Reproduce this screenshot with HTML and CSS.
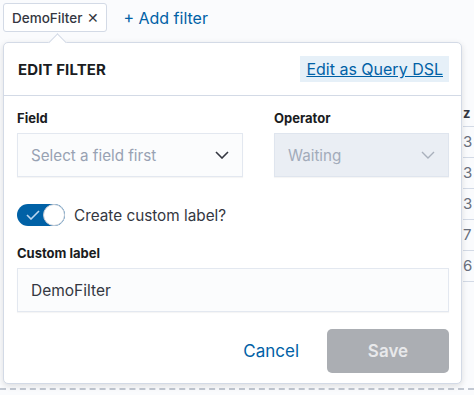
FILE: index.html
```html
<!DOCTYPE html>
<html lang="en">
<head>
  <meta charset="UTF-8" />
  <meta name="viewport" content="width=device-width, initial-scale=1.0"/>
  <title>Edit filter</title>
  <link rel="stylesheet" href="styles.css">
</head>
<body>
  <div class="filter-bar">
    <span class="pill">DemoFilter <span class="pill-x">&#x2715;</span></span>
    <a class="add-filter">+ Add filter</a>
  </div>

  <div class="content">
    <div class="table-col">
      <div class="cell head">z</div>
      <div class="cell">3</div>
      <div class="cell">3</div>
      <div class="cell">3</div>
      <div class="cell">7</div>
      <div class="cell">6</div>
    </div>
    <div class="dash-line"></div>

    <div class="popover">
      <div class="arrow"></div>
      <div class="pop-head">
        <span class="pop-title">EDIT FILTER</span>
        <a class="dsl-link">Edit as Query DSL</a>
      </div>
      <div class="pop-body">
        <div class="row">
          <div class="field grow">
            <label>Field</label>
            <div class="select">
              <span class="placeholder">Select a field first</span>
              <svg width="14" height="8" viewBox="0 0 14 8"><path d="M1 1l6 6 6-6" fill="none" stroke="#343741" stroke-width="1.6"/></svg>
            </div>
          </div>
          <div class="field op">
            <label>Operator</label>
            <div class="select disabled">
              <span class="placeholder">Waiting</span>
              <svg width="14" height="8" viewBox="0 0 14 8"><path d="M1 1l6 6 6-6" fill="none" stroke="#a9b0bc" stroke-width="1.4"/></svg>
            </div>
          </div>
        </div>

        <div class="switch-row">
          <span class="switch">
            <svg class="check" width="14" height="10" viewBox="0 0 14 10"><path d="M1 5l4 4 8-8" fill="none" stroke="#bcd7f0" stroke-width="1.6"/></svg>
            <span class="knob"></span>
          </span>
          <span class="switch-label">Create custom label?</span>
        </div>

        <div class="field">
          <label>Custom label</label>
          <div class="input">DemoFilter</div>
        </div>
      </div>
      <div class="pop-foot">
        <a class="cancel">Cancel</a>
        <button class="save">Save</button>
      </div>
    </div>
  </div>
</body>
</html>
```

FILE: styles.css
```css
body {
  margin: 0;
  background: #fafbfd;
  font-family: Inter, "Liberation Sans", sans-serif;
  color: #343741;
  height: 395px;
  overflow: hidden;
}

.filter-bar {
  display: flex;
  align-items: center;
  gap: 16px;
  padding: 3px 0 0 3px;
  height: 29px;
}

.pill {
  display: flex;
  align-items: center;
  gap: 5px;
  height: 29px;
  box-sizing: border-box;
  padding: 0 7px 0 8px;
  background: #fff;
  border: 1px solid #d3dae6;
  border-radius: 3px;
  font-size: 13.5px;
  font-weight: 500;
}

.pill-x {
  font-size: 14px;
  color: #343741;
}

.add-filter {
  color: #0061a6;
  font-size: 16px;
}

.content {
  position: relative;
  height: 366px;
}

.table-col {
  position: absolute;
  left: 463px;
  top: 66px;
  width: 20px;
}

.cell {
  height: 30px;
  line-height: 30px;
  border-bottom: 1px solid #d3dae6;
  font-size: 15px;
  color: #69707d;
}

.cell.head {
  height: 28px;
  font-weight: 700;
  color: #343741;
  font-size: 13px;
}

.dash-line {
  position: absolute;
  left: 0;
  right: 0;
  top: 356px;
  border-top: 2px dashed #c2c8d2;
}

.popover {
  position: absolute;
  left: 3px;
  top: 10px;
  width: 459px;
  height: 342px;
  background: #fff;
  border: 1px solid #d3dae6;
  border-radius: 5px;
  box-shadow: 0 2px 6px rgba(0, 0, 0, 0.12);
  box-sizing: border-box;
  display: flex;
  flex-direction: column;
}

.arrow {
  position: absolute;
  left: 47px;
  top: -7px;
  width: 12px;
  height: 12px;
  background: #fff;
  border-left: 1px solid #d3dae6;
  border-top: 1px solid #d3dae6;
  transform: rotate(45deg);
}

.pop-head {
  display: flex;
  align-items: center;
  justify-content: space-between;
  height: 52px;
  padding: 0 12px 0 14px;
  border-bottom: 1px solid #d3dae6;
}

.pop-title {
  font-size: 15px;
  font-weight: 700;
  color: #1a1c21;
  letter-spacing: 0.1px;
}

.dsl-link {
  background: #e6f0f8;
  color: #0061a6;
  text-decoration: underline;
  font-size: 16px;
  padding: 3px 6px;
  height: 26px;
  line-height: 20px;
  box-sizing: border-box;
}

.pop-body {
  padding: 14px 12px 0 13px;
  flex: 1;
}

.row {
  display: flex;
  gap: 31px;
}

.grow {
  flex: 1;
}

.op {
  width: 175px;
}

.field label {
  display: block;
  font-size: 13px;
  font-weight: 700;
  color: #1a1c21;
  height: 15px;
  margin-bottom: 8px;
}

.select,
.input {
  height: 44px;
  box-sizing: border-box;
  border: 1px solid #e3e8f0;
  background: #fbfcfd;
  display: flex;
  align-items: center;
  padding: 0 13px 0 13px;
  font-size: 15.2px;
  box-shadow: 0 1px 1px rgba(0, 0, 0, 0.04);
}

.select {
  justify-content: space-between;
}

.placeholder {
  color: #98a2b3;
}

.select.disabled {
  background: #eaeef4;
  border-color: #dfe5ee;
}

.select.disabled .placeholder {
  color: #a2abba;
}

.switch-row {
  display: flex;
  align-items: center;
  gap: 9px;
  margin: 27px 0 19px;
}

.switch {
  position: relative;
  width: 48px;
  height: 22px;
  border-radius: 11px;
  background: #0061a6;
  display: flex;
  align-items: center;
}

.check {
  margin-left: 9px;
}

.knob {
  position: absolute;
  right: 0;
  top: 0;
  width: 22px;
  height: 22px;
  box-sizing: border-box;
  border-radius: 50%;
  background: #fff;
  border: 1px solid #c5cbd5;
}

.switch-label {
  font-size: 15.3px;
  color: #343741;
}

.input {
  color: #343741;
  font-size: 15.5px;
}

.pop-foot {
  display: flex;
  align-items: center;
  justify-content: flex-end;
  gap: 28px;
  padding: 0 12px 10px;
}

.cancel {
  color: #0061a6;
  font-size: 17px;
}

.save {
  width: 122px;
  height: 44px;
  border: none;
  border-radius: 5px;
  background: #abaeb3;
  color: #e8e9eb;
  font-family: Inter, "Liberation Sans", sans-serif;
  font-size: 17px;
  font-weight: 600;
}
```
